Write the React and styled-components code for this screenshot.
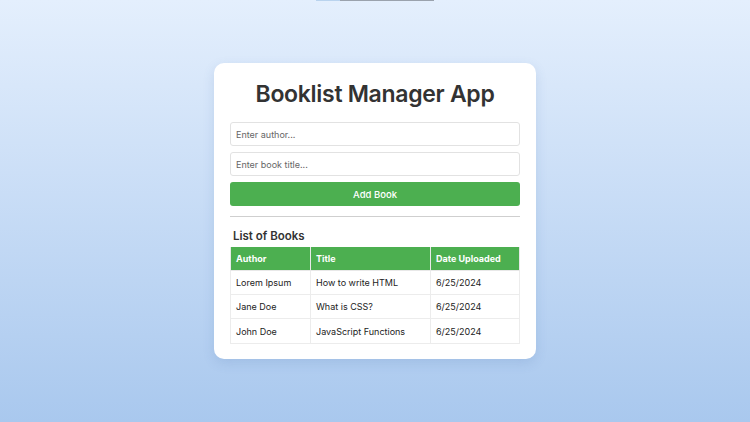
import React from "react";
import styled, { createGlobalStyle } from "styled-components";

const Global = createGlobalStyle`
  * { box-sizing: border-box; }
  html, body { margin: 0; padding: 0; }
  body {
    font-family: Inter, "Noto Sans", sans-serif;
    background: linear-gradient(180deg, #e4effd 0%, #a9c8ee 100%);
    min-height: 100vh;
    color: #333;
  }
`;

const Page = styled.div`
  position: relative;
  min-height: 100vh;
  display: flex;
  align-items: center;
  justify-content: center;
`;

const TopStrip = styled.div`
  position: absolute;
  top: 0;
  left: 50%;
  transform: translateX(-50%);
  width: 118px;
  height: 1px;
  background: linear-gradient(90deg, #b9d3ee 0 20%, #9aa2ad 20% 100%);
`;

const Card = styled.div`
  width: 322px;
  background: #fff;
  border-radius: 10px;
  padding: 16px 16px 15px;
  box-shadow: 0 4px 12px rgba(60, 100, 160, 0.15);
`;

const Title = styled.h1`
  margin: 0 0 13px;
  text-align: center;
  font-size: 23px;
  line-height: 30px;
  font-weight: 600;
  color: #333;
  letter-spacing: -0.3px;
`;

const Form = styled.div`
  display: flex;
  flex-direction: column;
  gap: 6px;
`;

const Input = styled.input`
  height: 24px;
  width: 100%;
  border: 1px solid #e2e2e2;
  border-radius: 3px;
  padding: 0 5px;
  font-family: inherit;
  font-size: 9px;
  color: #333;
  outline: none;
  &::placeholder { color: #666; }
`;

const Button = styled.button`
  height: 24px;
  width: 100%;
  border: none;
  border-radius: 3px;
  background: #4caf50;
  color: #fff;
  font-family: inherit;
  font-size: 9.5px;
  font-weight: 500;
`;

const Divider = styled.hr`
  margin: 10px 0 11px;
  border: none;
  border-top: 1px solid #cfcfcf;
`;

const Subtitle = styled.h3`
  margin: 0 0 3px 3px;
  font-size: 11.5px;
  line-height: 16px;
  font-weight: 600;
  color: #333;
`;

const Table = styled.table`
  width: 100%;
  border-collapse: collapse;
  font-size: 9px;
`;

const Th = styled.th`
  background: #4caf50;
  color: #fff;
  text-align: left;
  font-weight: 700;
  height: 23px;
  padding: 0 5px;
  border: 1px solid #e8e8e8;
  border-top: none;
  width: ${(p) => p.$w};
`;

const Td = styled.td`
  height: 24.4px;
  padding: 0 5px;
  border: 1px solid #ececec;
  color: #222;
`;

const books = [
  { author: "Lorem Ipsum", title: "How to write HTML", date: "6/25/2024" },
  { author: "Jane Doe", title: "What is CSS?", date: "6/25/2024" },
  { author: "John Doe", title: "JavaScript Functions", date: "6/25/2024" },
];

export default function App() {
  return (
    <>
      <Global />
      <Page>
        <TopStrip />
        <Card>
          <Title>Booklist Manager App</Title>
          <Form>
            <Input placeholder="Enter author..." />
            <Input placeholder="Enter book title..." />
            <Button>Add Book</Button>
          </Form>
          <Divider />
          <Subtitle>List of Books</Subtitle>
          <Table>
            <thead>
              <tr>
                <Th $w="80px">Author</Th>
                <Th $w="120px">Title</Th>
                <Th>Date Uploaded</Th>
              </tr>
            </thead>
            <tbody>
              {books.map((b, i) => (
                <tr key={i}>
                  <Td>{b.author}</Td>
                  <Td>{b.title}</Td>
                  <Td>{b.date}</Td>
                </tr>
              ))}
            </tbody>
          </Table>
        </Card>
      </Page>
    </>
  );
}
